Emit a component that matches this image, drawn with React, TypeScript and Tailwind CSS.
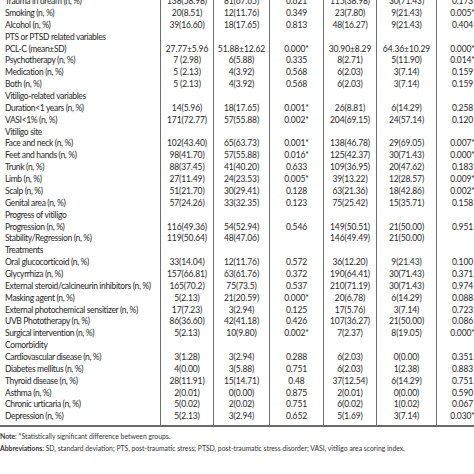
import React from "react";

type Row = string[] | string;

const rows: Row[] = [
  ["Trauma in dream (n, %)", "138(58.98)", "81(67.65)", "0.621", "115(38.98)", "30(71.43)", "0.173"],
  ["Smoking (n, %)", "20(8.51)", "12(11.76)", "0.349", "23(7.80)", "9(21.43)", "0.005*"],
  ["Alcohol (n, %)", "39(16.60)", "18(17.65)", "0.813", "48(16.27)", "9(21.43)", "0.404"],
  "PTS or PTSD related variables",
  ["PCL-C (mean±SD)", "27.77±5.96", "51.88±12.62", "0.000*", "30.90±8.29", "64.36±10.29", "0.000*"],
  ["Psychotherapy (n, %)", "7 (2.98)", "6(5.88)", "0.335", "8(2.71)", "5(11.90)", "0.014*"],
  ["Medication (n, %)", "5 (2.13)", "4(3.92)", "0.568", "6(2.03)", "3(7.14)", "0.159"],
  ["Both (n, %)", "5 (2.13)", "4(3.92)", "0.568", "6(2.03)", "3(7.14)", "0.159"],
  "Vitiligo-related variables",
  ["Duration<1 years (n, %)", "14(5.96)", "18(17.65)", "0.001*", "26(8.81)", "6(14.29)", "0.258"],
  ["VASI<1% (n, %)", "171(72.77)", "57(55.88)", "0.002*", "204(69.15)", "24(57.14)", "0.120"],
  "Vitiligo site",
  ["Face and neck (n, %)", "102(43.40)", "65(63.73)", "0.001*", "138(46.78)", "29(69.05)", "0.007*"],
  ["Feet and hands (n, %)", "98(41.70)", "57(55.88)", "0.016*", "125(42.37)", "30(71.43)", "0.000*"],
  ["Trunk (n, %)", "88(37.45)", "41(40.20)", "0.633", "109(36.95)", "20(47.62)", "0.183"],
  ["Limb (n, %)", "27(11.49)", "24(23.53)", "0.005*", "39(13.22)", "12(28.57)", "0.009*"],
  ["Scalp (n, %)", "51(21.70)", "30(29.41)", "0.128", "63(21.36)", "18(42.86)", "0.002*"],
  ["Genital area (n, %)", "57(24.26)", "33(32.35)", "0.123", "75(25.42)", "15(35.71)", "0.158"],
  "Progress of vitiligo",
  ["Progression (n, %)", "116(49.36)", "54(52.94)", "0.546", "149(50.51)", "21(50.00)", "0.951"],
  ["Stability/Regression (n, %)", "119(50.64)", "48(47.06)", "", "146(49.49)", "21(50.00)", ""],
  "Treatments",
  ["Oral glucocorticoid (n, %)", "33(14.04)", "12(11.76)", "0.572", "36(12.20)", "9(21.43)", "0.100"],
  ["Glycyrrhiza (n, %)", "157(66.81)", "63(61.76)", "0.372", "190(64.41)", "30(71.43)", "0.371"],
  ["External steroid/calcineurin inhibitors (n, %)", "165(70.2)", "75(73.5)", "0.537", "210(71.19)", "30(71.43)", "0.974"],
  ["Masking agent (n, %)", "5(2.13)", "21(20.59)", "0.000*", "20(6.78)", "6(14.29)", "0.088"],
  ["External photochemical sensitizer (n, %)", "17(7.23)", "3(2.94)", "0.125", "17(5.76)", "3(7.14)", "0.723"],
  ["UVB Phototherapy (n, %)", "86(36.60)", "42(41.18)", "0.426", "107(36.27)", "21(50.00)", "0.086"],
  ["Surgical intervention (n, %)", "5(2.13)", "10(9.80)", "0.002*", "7(2.37)", "8(19.05)", "0.000*"],
  "Comorbidity",
  ["Cardiovascular disease (n, %)", "3(1.28)", "3(2.94)", "0.288", "6(2.03)", "0(0.00)", "0.351"],
  ["Diabetes mellitus (n, %)", "4(0.00)", "3(5.88)", "0.751", "6(2.03)", "1(2.38)", "0.883"],
  ["Thyroid disease (n, %)", "28(11.91)", "15(14.71)", "0.48", "37(12.54)", "6(14.29)", "0.751"],
  ["Asthma (n, %)", "2(0.01)", "0(0.00)", "0.875", "2(0.01)", "0(0.00)", "0.590"],
  ["Chronic urticaria (n, %)", "5(0.02)", "2(0.02)", "0.751", "6(0.02)", "1(0.02)", "0.067"],
  ["Depression (n, %)", "5(2.13)", "3(2.94)", "0.652", "5(1.69)", "3(7.14)", "0.030*"],
];

const gridCols = "grid grid-cols-[160px_53px_56px_54px_53px_60px_52px] h-[11.87px] items-center";

function Cell({ text, first }: { text: string; first?: boolean }) {
  if (first) {
    return (
      <div className="pl-[5px] whitespace-nowrap h-full flex items-center tracking-[-0.35px]">{text}</div>
    );
  }
  return (
    <div className="border-l border-[#6f6f6f] h-full flex items-center justify-center whitespace-nowrap tracking-[-0.1px]">
      {text}
    </div>
  );
}

export default function App() {
  return (
    <div
      className="w-[474px] h-[474px] overflow-hidden bg-white text-[#262626]"
      style={{ fontFamily: "Lato, 'Noto Sans', sans-serif" }}
    >
      <div className="mt-[-4.5px] w-[488px] text-[8.5px] leading-none">
        {rows.map((r, i) =>
          typeof r === "string" ? (
            <div key={i} className={gridCols}>
              <Cell text={r} first />
              <Cell text="" />
              <Cell text="" />
              <Cell text="" />
              <Cell text="" />
              <Cell text="" />
              <Cell text="" />
            </div>
          ) : (
            <div key={i} className={gridCols}>
              {r.map((t, j) => (
                <Cell key={j} text={t} first={j === 0} />
              ))}
            </div>
          )
        )}
        <div className={gridCols + " !h-[3px]"}>
          <div />
          <div className="border-l border-[#6f6f6f] h-full" />
          <div className="border-l border-[#6f6f6f] h-full" />
          <div className="border-l border-[#6f6f6f] h-full" />
          <div className="border-l border-[#6f6f6f] h-full" />
          <div className="border-l border-[#6f6f6f] h-full" />
          <div className="border-l border-[#6f6f6f] h-full" />
        </div>
        <div className="h-[2px] bg-[#6a6a6a]" />
      </div>
      <div className="pt-[3px] text-[6.8px] leading-[12px] text-[#333] whitespace-nowrap">
        <div>
          <span className="font-bold">Note</span>: *Statistically significant difference between groups.
        </div>
        <div>
          <span className="font-bold">Abbreviations</span>: SD, standard deviation; PTS, post-traumatic stress; PTSD,
          post-traumatic stress disorder; VASI, vitiligo area scoring index.
        </div>
      </div>
    </div>
  );
}
